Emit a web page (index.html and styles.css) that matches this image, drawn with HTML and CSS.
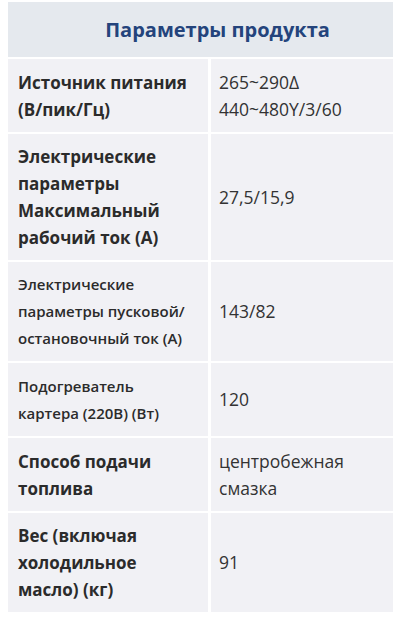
FILE: index.html
```html
<!DOCTYPE html>
<html lang="ru">
<head>
<meta charset="utf-8">
<link rel="stylesheet" href="styles.css">
</head>
<body>
<div class="spec">
  <div class="head">Параметры продукта</div>

  <div class="cell key">Источник питания (В/пик/Гц)</div>
  <div class="cell val">265~290Δ<br>440~480Y/3/60</div>

  <div class="cell key">Электрические параметры Максимальный рабочий ток (А)</div>
  <div class="cell val">27,5/15,9</div>

  <div class="cell key small">Электрические параметры пусковой/ остановочный ток (А)</div>
  <div class="cell val">143/82</div>

  <div class="cell key small">Подогреватель картера (220В) (Вт)</div>
  <div class="cell val">120</div>

  <div class="cell key">Способ подачи топлива</div>
  <div class="cell val">центробежная смазка</div>

  <div class="cell key">Вес (включая холодильное масло) (кг)</div>
  <div class="cell val">91</div>
</div>
</body>
</html>
```
FILE: styles.css
```css
html, body {
  margin: 0;
  background: #ffffff;
}
body {
  padding: 2px 8px 0 8px;
  font-family: "Open Sans", "Noto Sans", sans-serif;
  color: #333333;
}
.spec {
  width: 385px;
  display: grid;
  grid-template-columns: 200px 182px;
  column-gap: 3px;
  row-gap: 2px;
}
.head {
  grid-column: 1 / 3;
  background: #e5e9ee;
  color: #24447c;
  font-weight: 700;
  font-size: 20px;
  height: 55px;
  display: flex;
  align-items: center;
  justify-content: center;
  padding-left: 34px;
}
.cell {
  background: #f1f1f5;
  padding: 9px 10px;
  line-height: 27px;
  min-height: 55px;
  display: flex;
  align-items: center;
}
.key {
  font-weight: 700;
  font-size: 17px;
  color: #2b2b2b;
}
.key.small {
  font-size: 15px;
  font-weight: 600;
}
.val {
  font-size: 17.5px;
  padding-left: 8px;
  padding-right: 6px;
  color: #333333;
  flex-direction: column;
  justify-content: center;
  align-items: flex-start;
}
```
